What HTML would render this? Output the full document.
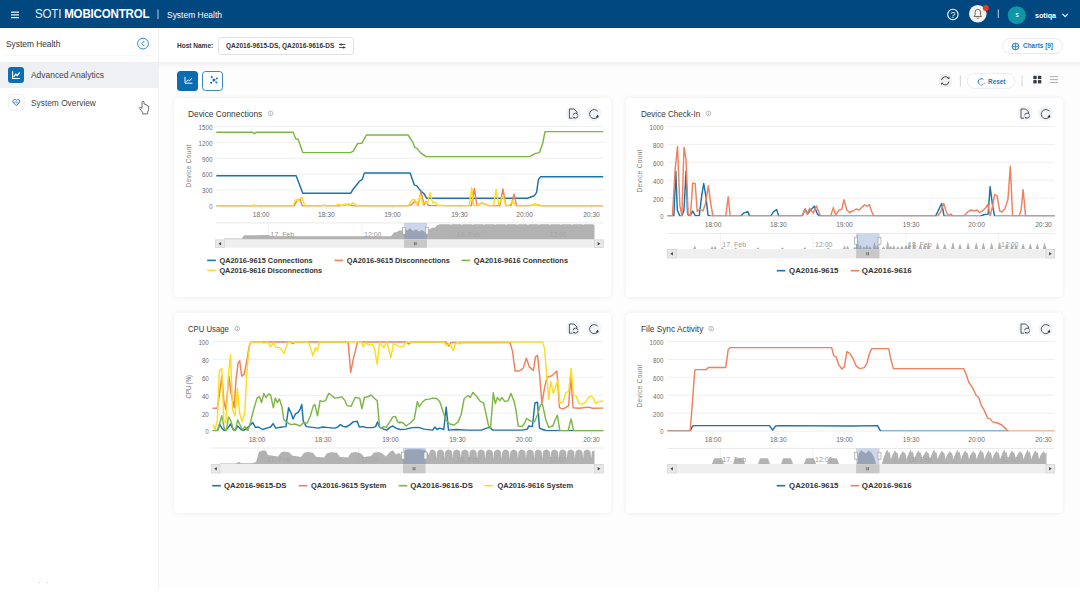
<!DOCTYPE html>
<html><head><meta charset="utf-8">
<style>
*{box-sizing:border-box;margin:0;padding:0}
html,body{width:1080px;height:607px;overflow:hidden;background:#fff;font-family:"Liberation Sans",sans-serif;}
.abs{position:absolute}
#hdr{position:absolute;left:0;top:0;width:1080px;height:28px;background:#00487f}
#side{position:absolute;left:0;top:28px;width:159px;height:560px;background:#fff;border-right:1px solid #f0f0f0}
#main{position:absolute;left:159px;top:28px;width:921px;height:560px;background:#fdfdfd}
#fbar{position:absolute;left:159px;top:28px;width:921px;height:34px;background:#fff}
#fsh{position:absolute;left:159px;top:62px;width:921px;height:8px;background:linear-gradient(to bottom,rgba(0,0,0,0.06),rgba(0,0,0,0.02) 50%,rgba(0,0,0,0))}
.card{position:absolute;background:#fff;border-radius:4px;box-shadow:0 0 5px rgba(0,0,0,0.075)}
.t{position:absolute;white-space:nowrap;line-height:1;transform-origin:0 50%}
svg text{font-family:"Liberation Sans",sans-serif}
.ax{font-size:6.6px;fill:#6c6c6c}
.nv{font-size:7px;fill:#9a9a9a}
.lg{font-size:7.6px;font-weight:bold;fill:#333}
.yt{font-size:6.4px;fill:#747474}
</style></head><body>
<div id="main"></div>
<div id="fbar"></div><div id="fsh"></div>
<div id="side"></div>
<div id="hdr"></div>

<!-- header -->
<svg class="abs" style="left:0;top:0" width="1080" height="28" viewBox="0 0 1080 28">
<g stroke="#fff" stroke-width="1.2"><line x1="11" x2="19" y1="12.2" y2="12.2"/><line x1="11" x2="19" y1="14.9" y2="14.9"/><line x1="11" x2="19" y1="17.6" y2="17.6"/></g>
<line x1="158" x2="158" y1="9.5" y2="19" stroke="#d6e0ea" stroke-width="0.9"/>
<circle cx="952.9" cy="14.5" r="5.2" fill="none" stroke="#fff" stroke-width="1.1"/>
<text x="952.9" y="17.6" text-anchor="middle" font-size="8.6" fill="#fff">?</text>
<circle cx="977.8" cy="13.7" r="8.8" fill="#f3f3f3"/>
<path d="M974.2 16.6 h6.6 l-0.9 -1.4 v-2.6 a2.4 2.4 0 0 0 -4.8 0 v2.6 z M976.6 17.6 a1 1 0 0 0 1.9 0" fill="none" stroke="#6f6250" stroke-width="0.85" stroke-linejoin="round" transform="translate(0.3 -0.4) translate(977.5 14) scale(1.12) translate(-977.5 -14)"/>
<circle cx="985.8" cy="8" r="3" fill="#e8391d"/>
<line x1="998.3" x2="998.3" y1="9.5" y2="18" stroke="#d6e0ea" stroke-width="0.9"/>
<circle cx="1016.8" cy="15.2" r="9" fill="#1097a7"/>
<text x="1017" y="17.2" text-anchor="middle" font-size="6.5" fill="#fff">s</text>
<path d="M1062.5 13.8 l2.7 2.8 l2.7 -2.8" fill="none" stroke="#fff" stroke-width="1.1"/>
</svg>
<div class="t" id="logo" style="left:35.0px;transform:scaleX(0.9620);top:8.3px;font-size:12px;color:#fff;letter-spacing:-0.2px"><span style="font-weight:normal;color:#e6eef6">SOTI</span> <b>MOBICONTROL</b></div>
<div class="t" id="hsys" style="left:167.0px;transform:scaleX(1.0098);top:10.5px;font-size:8.4px;color:#fff">System Health</div>
<div class="t" id="huser" style="left:1035.0px;transform:scaleX(0.9919);top:11.5px;font-size:7.2px;color:#fff;font-weight:bold">sotiqa</div>

<!-- sidebar -->
<div class="t" id="s1" style="left:6.2px;transform:scaleX(0.9715);top:39.6px;font-size:8.6px;color:#333">System Health</div>
<svg class="abs" style="left:0;top:28px" width="158" height="100" viewBox="0 28 158 100">
<circle cx="143" cy="43.6" r="5.4" fill="#fff" stroke="#1f7fc2" stroke-width="0.9"/>
<path d="M144.4 41 l-2.6 2.6 l2.6 2.6" fill="none" stroke="#1f7fc2" stroke-width="1"/>
<line x1="5" x2="152" y1="55.8" y2="55.8" stroke="#f5f5f5" stroke-width="1"/>
<rect x="0" y="62" width="158" height="26" fill="#eef0f3"/>
<rect x="8" y="67" width="16" height="16" rx="3" fill="#0f6db3"/>
<path d="M12.6 71.3 v7.2 h7.4 M13.8 76.8 l2 -2.6 l1.5 1.3 l2.3 -3.2" fill="none" stroke="#fff" stroke-width="1.2"/>
<rect x="8.5" y="94.5" width="15.5" height="15.5" rx="3" fill="#fff" stroke="#eceef1" stroke-width="0.8"/>
<path d="M16.3 105.6 l-3.2 -3.2 a1.8 1.8 0 0 1 3.2 -2 a1.8 1.8 0 0 1 3.2 2 z" fill="none" stroke="#2f80c2" stroke-width="1"/><path d="M13.2 102.6 h2 l0.8 -1.2 l0.9 2 l0.7 -0.8 h1.8" fill="none" stroke="#2f80c2" stroke-width="0.6"/>
<!-- hand cursor -->
<g transform="translate(139 101.3)"><path d="M3 1 v6 l-1.6 -1.2 l-1 1 l3.2 4.2 v1.6 h5 v-1.6 l1 -2.6 v-3.6 l-1.5 -0.4 v-0.6 l-1.5 -0.3 v-0.5 l-1.6 -0.3 v-1.7 a1 1 0 0 0 -2 0 z" fill="#fff" stroke="#333" stroke-width="0.7" stroke-linejoin="round"/></g>
</svg>
<div class="t" id="s2" style="left:30.7px;transform:scaleX(0.9581);top:71px;font-size:8.8px;color:#444">Advanced Analytics</div>
<div class="t" id="s3" style="left:30.7px;transform:scaleX(0.9483);top:98.5px;font-size:8.8px;color:#444">System Overview</div>
<div class="abs" style="left:38.5px;top:581.5px;width:1.5px;height:1.5px;background:#9fd8f0"></div>
<div class="abs" style="left:46.5px;top:581.5px;width:1.5px;height:1.5px;background:#9fd8f0"></div>

<!-- filter bar -->
<div class="t" id="hn" style="left:177.0px;transform:scaleX(0.9581);top:43.1px;font-size:6.8px;font-weight:bold;color:#333">Host Name:</div>
<div class="abs" style="left:218px;top:37px;width:136px;height:18px;border:1px solid #dfe1e5;border-radius:3px;background:#fff"></div>
<div class="t" id="hv" style="left:225.5px;transform:scaleX(0.9619);top:43.1px;font-size:6.8px;font-weight:bold;color:#333">QA2016-9615-DS, QA2016-9616-DS</div>
<svg class="abs" style="left:338px;top:42px" width="9" height="8" viewBox="0 0 9 8"><g stroke="#333" stroke-width="0.8"><line x1="1" x2="7.5" y1="2.5" y2="2.5"/><line x1="1" x2="7.5" y1="5.5" y2="5.5"/></g><circle cx="3.2" cy="2.5" r="1.1" fill="#333"/><circle cx="5.6" cy="5.5" r="1.1" fill="#333"/></svg>
<div class="abs" style="left:1002px;top:38px;width:60.5px;height:15.5px;border:1px solid #e8ebf0;border-radius:8px;background:#fff"></div>
<svg class="abs" style="left:1011px;top:41.5px" width="9" height="9" viewBox="0 0 9 9"><circle cx="4.5" cy="4.5" r="3.4" fill="#d8e8f5" stroke="#2378b9" stroke-width="0.9"/><path d="M4.5 1.2 v6.6 M1.2 4.5 h6.6" stroke="#2378b9" stroke-width="0.7"/></svg>
<div class="t" id="cb" style="left:1022.5px;transform:scaleX(0.9746);top:42.5px;font-size:6.6px;font-weight:bold;color:#2378b9">Charts [9]</div>

<!-- toolbar -->
<div class="abs" style="left:176.7px;top:71.3px;width:21px;height:19.5px;border-radius:3.5px;background:#0b6cb1"></div>
<svg class="abs" style="left:176.7px;top:71.3px" width="21" height="19.5" viewBox="0 0 21 19.5"><path d="M8 5.8 v6.4 h7.4 M9.2 10.4 l2.4 -1.3 l1 0.7 l1.8 -2.1" fill="none" stroke="#fff" stroke-width="1"/><circle cx="14.4" cy="7.6" r="0.7" fill="#fff"/></svg>
<div class="abs" style="left:202px;top:71.3px;width:21px;height:19.5px;border-radius:3.5px;background:#fff;border:1px solid #3c86bf"></div>
<svg class="abs" style="left:202px;top:71.3px" width="21" height="19.5" viewBox="0 0 21 19.5"><g fill="#1a6fb0"><circle cx="11.9" cy="9.1" r="1.45"/><circle cx="9.7" cy="6.1" r="1"/><circle cx="14.9" cy="7.4" r="0.95"/><circle cx="9.1" cy="11.8" r="1.05"/><circle cx="14.4" cy="11.5" r="1"/></g><path d="M9.7 6.1 L14.4 11.5 M14.9 7.4 L9.1 11.8" stroke="#1a6fb0" stroke-width="0.35"/></svg>
<svg class="abs" style="left:930px;top:70px" width="140" height="22" viewBox="930 70 140 22">
<circle cx="945.3" cy="80.8" r="6.8" fill="#eef0f2"/>
<path d="M941.6 80 a3.8 3.8 0 0 1 6.8 -1.8 M949 81.6 a3.8 3.8 0 0 1 -6.8 1.8" fill="none" stroke="#333" stroke-width="0.9"/>
<path d="M949.4 76.6 v2.2 h-2.2 z M941.2 85 v-2.2 h2.2 z" fill="#333"/>
<line x1="960.4" x2="960.4" y1="75.5" y2="86.5" stroke="#c9ccd1" stroke-width="0.8"/>
<rect x="967.3" y="73.4" width="47.6" height="15" rx="7.5" fill="#fff" stroke="#e8ebf0" stroke-width="0.9"/>
<path d="M983.4 79.4 a3.2 3.2 0 1 0 1 3.4" fill="none" stroke="#2378b9" stroke-width="1" stroke-dasharray="9 0.8 1.4 0.8 1.4 0.8"/>
<line x1="1022" x2="1022" y1="75.5" y2="86.5" stroke="#c9ccd1" stroke-width="0.8"/>
<g fill="#333a44"><rect x="1033.3" y="75.8" width="3.4" height="3.3"/><rect x="1037.9" y="75.8" width="3.4" height="3.3"/><rect x="1033.3" y="80.1" width="3.4" height="3.3"/><rect x="1037.9" y="80.1" width="3.4" height="3.3"/></g>
<g stroke="#999" stroke-width="0.8"><line x1="1050" x2="1058" y1="76.6" y2="76.6"/><line x1="1050" x2="1058" y1="79.6" y2="79.6"/><line x1="1050" x2="1058" y1="82.6" y2="82.6"/></g>
</svg>
<div class="t" id="rb" style="left:988.3px;transform:scaleX(0.9451);top:78.6px;font-size:6.8px;font-weight:bold;color:#2378b9">Reset</div>

<!-- cards -->
<div class="card" style="left:174px;top:98px;width:436.5px;height:199px"></div>
<div class="card" style="left:626px;top:98px;width:437px;height:199px"></div>
<div class="card" style="left:174px;top:312.5px;width:436.5px;height:200.5px"></div>
<div class="card" style="left:626px;top:312.5px;width:437px;height:200.5px"></div>
<div class="t ct" id="t1" style="left:188.4px;transform:scaleX(0.9270);top:109.8px;font-size:9px;color:#383838">Device Connections</div>
<div class="t ct" id="t2" style="left:640.5px;transform:scaleX(0.8981);top:109.8px;font-size:9px;color:#383838">Device Check-In</div>
<div class="t ct" id="t3" style="left:188.1px;transform:scaleX(0.8584);top:324.8px;font-size:9px;color:#383838">CPU Usage</div>
<div class="t ct" id="t4" style="left:640.5px;transform:scaleX(0.9225);top:324.8px;font-size:9px;color:#383838">File Sync Activity</div>

<svg class="abs" style="left:0;top:0" width="1080" height="607" viewBox="0 0 1080 607">
<line x1="216.3" x2="603.3" y1="126.5" y2="126.5" stroke="#e8e8e8" stroke-width="0.7"/>
<text x="212.5" y="129.8" text-anchor="end" class="ax" textLength="13.9" lengthAdjust="spacingAndGlyphs">1500</text>
<line x1="216.3" x2="603.3" y1="142.4" y2="142.4" stroke="#e8e8e8" stroke-width="0.7"/>
<text x="212.5" y="145.7" text-anchor="end" class="ax" textLength="13.9" lengthAdjust="spacingAndGlyphs">1200</text>
<line x1="216.3" x2="603.3" y1="158.3" y2="158.3" stroke="#e8e8e8" stroke-width="0.7"/>
<text x="212.5" y="161.6" text-anchor="end" class="ax" textLength="10.4" lengthAdjust="spacingAndGlyphs">900</text>
<line x1="216.3" x2="603.3" y1="174.1" y2="174.1" stroke="#e8e8e8" stroke-width="0.7"/>
<text x="212.5" y="177.4" text-anchor="end" class="ax" textLength="10.4" lengthAdjust="spacingAndGlyphs">600</text>
<line x1="216.3" x2="603.3" y1="190.0" y2="190.0" stroke="#e8e8e8" stroke-width="0.7"/>
<text x="212.5" y="193.3" text-anchor="end" class="ax" textLength="10.4" lengthAdjust="spacingAndGlyphs">300</text>
<line x1="216.3" x2="603.3" y1="205.9" y2="205.9" stroke="#e8e8e8" stroke-width="0.7"/>
<text x="212.5" y="209.2" text-anchor="end" class="ax" textLength="3.2" lengthAdjust="spacingAndGlyphs">0</text>
<line x1="261.1" x2="261.1" y1="206.0" y2="209.5" stroke="#dfe3ea" stroke-width="0.7"/>
<text x="261.1" y="217.0" text-anchor="middle" class="ax" textLength="16.7" lengthAdjust="spacingAndGlyphs">18:00</text>
<line x1="326.3" x2="326.3" y1="206.0" y2="209.5" stroke="#dfe3ea" stroke-width="0.7"/>
<text x="326.3" y="217.0" text-anchor="middle" class="ax" textLength="16.7" lengthAdjust="spacingAndGlyphs">18:30</text>
<line x1="392.5" x2="392.5" y1="206.0" y2="209.5" stroke="#dfe3ea" stroke-width="0.7"/>
<text x="392.5" y="217.0" text-anchor="middle" class="ax" textLength="16.7" lengthAdjust="spacingAndGlyphs">19:00</text>
<line x1="459.5" x2="459.5" y1="206.0" y2="209.5" stroke="#dfe3ea" stroke-width="0.7"/>
<text x="459.5" y="217.0" text-anchor="middle" class="ax" textLength="16.7" lengthAdjust="spacingAndGlyphs">19:30</text>
<line x1="524.7" x2="524.7" y1="206.0" y2="209.5" stroke="#dfe3ea" stroke-width="0.7"/>
<text x="524.7" y="217.0" text-anchor="middle" class="ax" textLength="16.7" lengthAdjust="spacingAndGlyphs">20:00</text>
<line x1="591.5" x2="591.5" y1="206.0" y2="209.5" stroke="#dfe3ea" stroke-width="0.7"/>
<text x="591.5" y="217.0" text-anchor="middle" class="ax" textLength="16.7" lengthAdjust="spacingAndGlyphs">20:30</text>
<clipPath id="cp1"><rect x="216.3" y="120.0" width="387.0" height="86.5"/></clipPath><g clip-path="url(#cp1)">
<path d="M216.3 132.2 L252.3 132.2 L254.4 133.6 L256.4 132.2 L293.1 132.2 L295.7 138.7 L298.1 139.3 L302.8 152.6 L350.1 152.6 L353.1 151.3 L357.6 143.6 L361.9 143.2 L366.4 135.0 L400.0 135.0 L408.1 135.0 L412.6 141.8 L414.7 147.3 L416.7 148.1 L420.4 152.6 L426.1 156.6 L529.4 156.6 L535.5 153.4 L539.5 152.6 L542.6 143.8 L545.0 131.6 L603.3 131.6" fill="none" stroke="#7db646" stroke-width="1.45" stroke-linejoin="round" stroke-linecap="round"/>
<path d="M216.3 175.8 L296.1 175.8 L302.8 193.3 L350.7 193.3 L353.1 189.2 L359.3 181.5 L362.3 179.4 L364.4 172.9 L400.0 172.9 L410.2 172.9 L414.3 185.1 L416.7 185.6 L420.4 190.6 L424.0 193.7 L426.5 198.2 L527.3 198.2 L534.4 195.7 L536.5 192.7 L538.5 179.4 L540.6 176.8 L603.3 176.8" fill="none" stroke="#1a73ab" stroke-width="1.45" stroke-linejoin="round" stroke-linecap="round"/>
<path d="M216.3 205.9 L294.1 205.9 L297.1 200.2 L300.2 199.4 L302.2 205.9 L322.6 205.9 L324.6 205.3 L326.7 205.9 L340.9 205.9 L345.0 204.9 L349.1 204.3 L352.1 205.9 L400.0 205.9 L408.1 205.9 L411.2 204.9 L415.3 200.8 L417.9 205.5 L421.0 191.7 L424.0 204.9 L426.1 201.4 L428.5 205.5 L471.3 205.9 L474.4 188.6 L477.0 205.9 L481.5 202.9 L489.6 205.9 L499.8 205.9 L502.9 189.0 L505.9 205.9 L511.0 205.5 L514.1 194.1 L516.5 205.9 L530.4 205.5 L535.5 204.3 L540.6 205.9 L603.3 205.9" fill="none" stroke="#f0805e" stroke-width="1.45" stroke-linejoin="round" stroke-linecap="round"/>
<path d="M216.3 205.9 L252.3 205.9 L253.7 204.7 L255.4 205.9 L293.1 205.9 L295.7 199.8 L297.7 200.8 L300.2 198.2 L302.2 197.8 L304.7 205.9 L320.6 205.9 L323.6 205.3 L326.7 205.9 L334.8 205.9 L337.9 204.3 L341.9 205.5 L346.0 203.9 L349.1 205.5 L353.1 202.9 L357.2 205.9 L400.0 205.9 L408.1 205.9 L412.2 199.8 L414.7 199.4 L417.3 204.9 L420.4 194.7 L422.8 203.9 L425.5 201.9 L427.5 202.9 L430.1 192.7 L432.6 202.9 L435.0 201.9 L437.7 205.5 L442.8 205.1 L444.8 205.9 L469.3 205.9 L471.7 187.6 L473.7 205.9 L476.4 205.5 L482.5 202.9 L489.6 205.9 L493.7 204.9 L496.1 189.6 L498.8 204.9 L500.8 199.8 L502.9 195.7 L505.9 205.5 L510.0 204.9 L512.4 200.8 L516.1 205.9 L530.4 205.9 L533.4 204.5 L539.5 204.9 L540.6 205.9 L603.3 205.9" fill="none" stroke="#fddc1e" stroke-width="1.45" stroke-linejoin="round" stroke-linecap="round"/>
</g>
<text transform="translate(190.5 166.0) rotate(-90)" text-anchor="middle" class="yt" textLength="43.0" lengthAdjust="spacing">Device Count</text>
<line x1="215.5" x2="603.3" y1="222.9" y2="222.9" stroke="#e0e0e0" stroke-width="0.7"/>
<line x1="268.4" x2="268.4" y1="222.9" y2="239.6" stroke="#e6e6e6" stroke-width="0.6"/>
<text x="270.5" y="237.4" class="nv">17. Feb</text>
<line x1="361.8" x2="361.8" y1="222.9" y2="239.6" stroke="#e6e6e6" stroke-width="0.6"/>
<text x="364.0" y="237.4" class="nv">12:00</text>
<line x1="453.5" x2="453.5" y1="222.9" y2="239.6" stroke="#e6e6e6" stroke-width="0.6"/>
<text x="456.5" y="237.4" class="nv">18. Feb</text>
<line x1="546.5" x2="546.5" y1="222.9" y2="239.6" stroke="#e6e6e6" stroke-width="0.6"/>
<text x="549.5" y="237.4" class="nv">12:00</text>
<path d="M224.0 239.6 L224.0 238.6 L241.8 238.6 L244.0 235.3 L268.0 235.1 L272.0 236.2 L391.0 236.2 L394.0 232.5 L397.0 232.0 L399.0 230.4 L402.0 230.4 L404.0 228.0 L407.0 230.5 L410.0 228.3 L413.0 231.0 L416.0 229.5 L419.0 231.5 L422.0 230.0 L425.0 232.0 L427.0 229.0 L430.0 229.2 L432.0 227.5 L435.0 227.8 L437.0 225.2 L440.0 224.2 L440.0 224.2 L450.0 224.2 L451.0 225.0 L452.0 224.2 L451.0 224.2 L461.0 224.2 L462.0 225.0 L463.0 224.2 L462.0 224.2 L472.0 224.2 L473.0 225.0 L474.0 224.2 L473.0 224.2 L483.0 224.2 L484.0 225.0 L485.0 224.2 L484.0 224.2 L494.0 224.2 L495.0 225.0 L496.0 224.2 L495.0 224.2 L505.0 224.2 L506.0 225.0 L507.0 224.2 L506.0 224.2 L516.0 224.2 L517.0 225.0 L518.0 224.2 L517.0 224.2 L527.0 224.2 L528.0 225.0 L529.0 224.2 L528.0 224.2 L538.0 224.2 L539.0 225.0 L540.0 224.2 L539.0 224.2 L549.0 224.2 L550.0 225.0 L551.0 224.2 L550.0 224.2 L560.0 224.2 L561.0 225.0 L562.0 224.2 L561.0 224.2 L571.0 224.2 L572.0 225.0 L573.0 224.2 L572.0 224.2 L582.0 224.2 L583.0 225.0 L584.0 224.2 L583.0 224.2 L593.0 224.2 L594.0 225.0 L595.0 224.2 L594.5 224.2 L594.5 239.6 Z" fill="#a4a4a4" fill-opacity="0.85"/>
<rect x="404.0" y="222.9" width="23.0" height="16.7" fill="#6685c2" fill-opacity="0.33"/>
<rect x="402.5" y="227.2" width="3" height="7" fill="#f4f4f4" stroke="#9a9a9a" stroke-width="0.6"/>
<rect x="425.5" y="227.2" width="3" height="7" fill="#f4f4f4" stroke="#9a9a9a" stroke-width="0.6"/>
<rect x="215.5" y="239.6" width="387.8" height="8.2" fill="#efefef"/>
<rect x="404.0" y="239.6" width="23.0" height="8.2" fill="#c8c8c8"/>
<line x1="414.5" x2="414.5" y1="242.1" y2="245.3" stroke="#444" stroke-width="0.7"/>
<line x1="416.1" x2="416.1" y1="242.1" y2="245.3" stroke="#444" stroke-width="0.7"/>
<rect x="215.5" y="239.9" width="8.8" height="7.6" fill="#e8e8e8" stroke="#cfcfcf" stroke-width="0.6"/>
<path d="M221.1 241.9 L221.1 245.5 L218.5 243.7 Z" fill="#444"/>
<rect x="594.5" y="239.9" width="8.8" height="7.6" fill="#e8e8e8" stroke="#cfcfcf" stroke-width="0.6"/>
<path d="M597.7 241.9 L597.7 245.5 L600.3 243.7 Z" fill="#444"/>
<line x1="207.2" x2="215.8" y1="260.4" y2="260.4" stroke="#1a73ab" stroke-width="1.6"/>
<text x="219.4" y="263.1" class="lg" textLength="93.2" lengthAdjust="spacingAndGlyphs">QA2016-9615 Connections</text>
<line x1="334.5" x2="343.1" y1="260.4" y2="260.4" stroke="#f0805e" stroke-width="1.6"/>
<text x="346.7" y="263.1" class="lg" textLength="103.2" lengthAdjust="spacingAndGlyphs">QA2016-9615 Disconnections</text>
<line x1="461.5" x2="470.1" y1="260.4" y2="260.4" stroke="#7db646" stroke-width="1.6"/>
<text x="473.7" y="263.1" class="lg" textLength="94.4" lengthAdjust="spacingAndGlyphs">QA2016-9616 Connections</text>
<line x1="207.2" x2="215.8" y1="270.4" y2="270.4" stroke="#fddc1e" stroke-width="1.6"/>
<text x="219.4" y="273.1" class="lg" textLength="102.8" lengthAdjust="spacingAndGlyphs">QA2016-9616 Disconnections</text>
<circle cx="573.6" cy="113.6" r="7.6" fill="#f3f4f6"/>
<circle cx="593.9" cy="113.6" r="7.6" fill="#f3f4f6"/>
<path d="M569.4 118.2 v-9.2 h4.6 l3 3 v1.6" fill="none" stroke="#3d4654" stroke-width="0.9" stroke-linejoin="round"/>
<path d="M569.4 118.2 h3" fill="none" stroke="#3d4654" stroke-width="0.9"/>
<circle cx="575.5" cy="115.6" r="2.5" fill="none" stroke="#3d4654" stroke-width="0.9" stroke-dasharray="6.5 1.5"/>
<circle cx="574.0" cy="117.8" r="0.8" fill="#3d4654"/>
<path d="M597.5 110.9 a4.6 4.6 0 1 0 0.6 5.6" fill="none" stroke="#3d4654" stroke-width="0.9" stroke-linecap="round"/>
<path d="M595.6 117.2 l2.9 0.3 l-0.5 -2.9 z" fill="#2a313c"/>
<circle cx="270.6" cy="113.4" r="2.3" fill="none" stroke="#8a8f98" stroke-width="0.6"/><path d="M270.6 113.2 v1.6" stroke="#8a8f98" stroke-width="0.7"/><circle cx="270.6" cy="112.3" r="0.4" fill="#8a8f98"/>
<line x1="667.3" x2="1054.7" y1="126.5" y2="126.5" stroke="#e8e8e8" stroke-width="0.7"/>
<text x="663.5" y="129.8" text-anchor="end" class="ax" textLength="13.9" lengthAdjust="spacingAndGlyphs">1000</text>
<line x1="667.3" x2="1054.7" y1="144.4" y2="144.4" stroke="#e8e8e8" stroke-width="0.7"/>
<text x="663.5" y="147.7" text-anchor="end" class="ax" textLength="10.4" lengthAdjust="spacingAndGlyphs">800</text>
<line x1="667.3" x2="1054.7" y1="162.3" y2="162.3" stroke="#e8e8e8" stroke-width="0.7"/>
<text x="663.5" y="165.6" text-anchor="end" class="ax" textLength="10.4" lengthAdjust="spacingAndGlyphs">600</text>
<line x1="667.3" x2="1054.7" y1="180.3" y2="180.3" stroke="#e8e8e8" stroke-width="0.7"/>
<text x="663.5" y="183.6" text-anchor="end" class="ax" textLength="10.4" lengthAdjust="spacingAndGlyphs">400</text>
<line x1="667.3" x2="1054.7" y1="198.2" y2="198.2" stroke="#e8e8e8" stroke-width="0.7"/>
<text x="663.5" y="201.5" text-anchor="end" class="ax" textLength="10.4" lengthAdjust="spacingAndGlyphs">200</text>
<line x1="667.3" x2="1054.7" y1="216.1" y2="216.1" stroke="#e8e8e8" stroke-width="0.7"/>
<text x="663.5" y="219.4" text-anchor="end" class="ax" textLength="3.2" lengthAdjust="spacingAndGlyphs">0</text>
<line x1="713.1" x2="713.1" y1="216.1" y2="219.6" stroke="#dfe3ea" stroke-width="0.7"/>
<text x="713.1" y="227.1" text-anchor="middle" class="ax" textLength="16.7" lengthAdjust="spacingAndGlyphs">18:00</text>
<line x1="778.3" x2="778.3" y1="216.1" y2="219.6" stroke="#dfe3ea" stroke-width="0.7"/>
<text x="778.3" y="227.1" text-anchor="middle" class="ax" textLength="16.7" lengthAdjust="spacingAndGlyphs">18:30</text>
<line x1="844.5" x2="844.5" y1="216.1" y2="219.6" stroke="#dfe3ea" stroke-width="0.7"/>
<text x="844.5" y="227.1" text-anchor="middle" class="ax" textLength="16.7" lengthAdjust="spacingAndGlyphs">19:00</text>
<line x1="911.2" x2="911.2" y1="216.1" y2="219.6" stroke="#dfe3ea" stroke-width="0.7"/>
<text x="911.2" y="227.1" text-anchor="middle" class="ax" textLength="16.7" lengthAdjust="spacingAndGlyphs">19:30</text>
<line x1="976.7" x2="976.7" y1="216.1" y2="219.6" stroke="#dfe3ea" stroke-width="0.7"/>
<text x="976.7" y="227.1" text-anchor="middle" class="ax" textLength="16.7" lengthAdjust="spacingAndGlyphs">20:00</text>
<line x1="1043.5" x2="1043.5" y1="216.1" y2="219.6" stroke="#dfe3ea" stroke-width="0.7"/>
<text x="1043.5" y="227.1" text-anchor="middle" class="ax" textLength="16.7" lengthAdjust="spacingAndGlyphs">20:30</text>
<clipPath id="cp2"><rect x="667.3" y="120.0" width="387.4" height="96.3"/></clipPath><g clip-path="url(#cp2)">
<path d="M667.3 216.1 L673.8 216.1 L675.8 171.3 L677.3 210.0 L679.9 216.1 L681.9 216.1 L684.0 210.0 L686.0 171.3 L687.6 214.1 L690.1 216.1 L692.7 211.0 L695.2 215.7 L699.3 215.7 L701.7 195.7 L703.7 183.5 L705.8 195.7 L708.0 215.1 L710.5 216.1 L741.0 216.1 L743.7 213.1 L747.7 211.6 L749.8 216.1 L770.6 216.1 L773.6 211.6 L776.7 209.6 L778.7 216.1 L802.1 216.1 L805.2 209.0 L807.6 214.1 L809.7 211.0 L814.4 206.3 L817.4 214.1 L819.4 216.1 L850.0 216.1 L850.0 216.1 L935.6 216.1 L941.7 203.5 L944.1 216.1 L980.4 216.1 L984.4 214.5 L988.1 214.1 L990.1 186.6 L992.6 205.9 L994.6 216.1 L1054.7 216.1" fill="none" stroke="#1a73ab" stroke-width="1.45" stroke-linejoin="round" stroke-linecap="round"/>
<path d="M667.3 216.1 L672.4 216.1 L675.2 169.3 L677.5 146.4 L679.9 205.9 L681.9 215.7 L684.0 147.3 L686.0 159.1 L688.1 214.1 L690.5 215.7 L692.7 183.1 L695.2 183.5 L697.2 211.6 L699.7 209.0 L702.9 211.0 L705.4 203.9 L708.4 185.6 L710.5 201.9 L712.9 216.1 L725.7 216.1 L728.2 196.8 L730.2 216.1 L800.1 216.1 L802.7 215.1 L804.8 209.4 L807.2 214.1 L809.7 208.4 L813.3 213.1 L816.4 205.9 L820.5 216.1 L830.6 216.1 L833.3 207.6 L835.7 215.1 L838.8 210.4 L841.9 209.0 L843.9 199.8 L846.9 210.0 L850.0 213.1 L850.0 212.0 L853.1 211.0 L856.1 209.0 L859.2 210.0 L862.2 206.9 L864.7 204.9 L867.3 206.3 L869.4 204.5 L871.4 211.0 L874.0 216.1 L937.6 216.1 L940.6 212.0 L943.7 203.5 L946.8 213.1 L948.8 215.7 L950.8 214.1 L952.9 216.1 L964.1 216.1 L968.1 211.6 L971.2 210.0 L974.3 211.0 L977.3 210.0 L979.4 212.6 L982.4 211.0 L985.5 208.0 L987.9 204.3 L990.1 216.1 L992.6 205.9 L994.6 194.7 L997.1 195.7 L999.7 211.0 L1001.8 212.0 L1004.8 209.0 L1007.9 199.8 L1010.3 166.2 L1012.6 216.1 L1019.1 216.1 L1021.1 210.0 L1023.1 189.6 L1025.6 216.1 L1054.7 216.1" fill="none" stroke="#f0805e" stroke-width="1.45" stroke-linejoin="round" stroke-linecap="round"/>
</g>
<text transform="translate(642.4 171.0) rotate(-90)" text-anchor="middle" class="yt" textLength="43.0" lengthAdjust="spacing">Device Count</text>
<line x1="667.3" x2="1054.7" y1="233.4" y2="233.4" stroke="#e0e0e0" stroke-width="0.7"/>
<line x1="720.3" x2="720.3" y1="233.4" y2="249.1" stroke="#e6e6e6" stroke-width="0.6"/>
<text x="722.3" y="246.9" class="nv">17. Feb</text>
<line x1="813.0" x2="813.0" y1="233.4" y2="249.1" stroke="#e6e6e6" stroke-width="0.6"/>
<text x="815.0" y="246.9" class="nv">12:00</text>
<line x1="906.0" x2="906.0" y1="233.4" y2="249.1" stroke="#e6e6e6" stroke-width="0.6"/>
<text x="908.0" y="246.9" class="nv">18. Feb</text>
<line x1="998.5" x2="998.5" y1="233.4" y2="249.1" stroke="#e6e6e6" stroke-width="0.6"/>
<text x="1001.0" y="246.9" class="nv">12:00</text>
<path d="M676.0 249.1 L693.3 249.1 L694.5 245.9 L695.1 245.9 L696.3 249.1 L710.6 249.1 L711.8 246.5 L712.4 246.5 L713.6 249.1 L713.7 249.1 L714.9 246.3 L715.5 246.3 L716.7 249.1 L720.8 249.1 L722.0 247.3 L722.6 247.3 L723.8 249.1 L734.1 249.1 L735.3 247.7 L735.9 247.7 L737.1 249.1 L756.5 249.1 L757.7 247.6 L758.3 247.6 L759.5 249.1 L780.9 249.1 L782.1 247.6 L782.7 247.6 L783.9 249.1 L803.3 249.1 L804.5 247.3 L805.1 247.3 L806.3 249.1 L826.7 249.1 L827.9 247.7 L828.5 247.7 L829.7 249.1 L843.0 249.1 L844.2 245.9 L844.8 245.9 L846.0 249.1 L846.1 249.1 L847.3 245.9 L847.9 245.9 L849.1 249.1 L853.2 249.1 L854.4 247.1 L855.0 247.1 L856.2 249.1 L855.7 249.1 L857.0 234.6 L857.6 234.6 L858.9 249.1 L858.9 249.1 L860.2 245.1 L860.8 245.1 L862.1 249.1 L862.4 249.1 L863.7 246.6 L864.3 246.6 L865.6 249.1 L865.4 249.1 L866.7 244.9 L867.3 244.9 L868.6 249.1 L868.4 249.1 L869.7 246.6 L870.3 246.6 L871.6 249.1 L872.9 249.1 L874.2 242.6 L874.8 242.6 L876.1 249.1 L875.9 249.1 L877.2 245.1 L877.8 245.1 L879.1 249.1 L881.8 249.1 L883.3 246.6 L883.9 246.6 L885.4 249.1 L885.9 249.1 L887.4 241.6 L888.0 241.6 L889.5 249.1 L888.9 249.1 L890.4 246.1 L891.0 246.1 L892.5 249.1 L892.0 249.1 L893.5 245.6 L894.1 245.6 L895.6 249.1 L896.1 249.1 L897.6 246.6 L898.2 246.6 L899.7 249.1 L900.1 249.1 L901.6 246.1 L902.2 246.1 L903.7 249.1 L904.2 249.1 L905.7 245.1 L906.3 245.1 L907.8 249.1 L907.3 249.1 L908.8 243.1 L909.4 243.1 L910.9 249.1 L912.4 249.1 L913.9 242.6 L914.5 242.6 L916.0 249.1 L918.5 249.1 L920.0 244.6 L920.6 244.6 L922.1 249.1 L922.6 249.1 L924.1 245.1 L924.7 245.1 L926.2 249.1 L926.6 249.1 L928.1 244.1 L928.7 244.1 L930.2 249.1 L935.8 249.1 L937.3 243.1 L937.9 243.1 L939.4 249.1 L942.9 249.1 L944.4 244.1 L945.0 244.1 L946.5 249.1 L951.1 249.1 L952.6 242.6 L953.2 242.6 L954.7 249.1 L958.2 249.1 L959.7 244.1 L960.3 244.1 L961.8 249.1 L966.3 249.1 L967.8 243.1 L968.4 243.1 L969.9 249.1 L974.5 249.1 L976.0 243.1 L976.6 243.1 L978.1 249.1 L981.6 249.1 L983.1 243.1 L983.7 243.1 L985.2 249.1 L989.8 249.1 L991.3 243.1 L991.9 243.1 L993.4 249.1 L997.9 249.1 L999.4 242.6 L1000.0 242.6 L1001.5 249.1 L1005.1 249.1 L1006.6 244.1 L1007.2 244.1 L1008.7 249.1 L1010.1 249.1 L1011.6 245.1 L1012.2 245.1 L1013.7 249.1 L1014.2 249.1 L1015.7 245.1 L1016.3 245.1 L1017.8 249.1 L1021.3 249.1 L1022.8 244.1 L1023.4 244.1 L1024.9 249.1 L1028.5 249.1 L1030.0 244.1 L1030.6 244.1 L1032.1 249.1 L1035.6 249.1 L1037.1 244.1 L1037.7 244.1 L1039.2 249.1 L1042.7 249.1 L1044.2 243.1 L1044.8 243.1 L1046.3 249.1 L1047.0 249.1 Z" fill="#a4a4a4" fill-opacity="0.85"/>
<rect x="856.1" y="233.4" width="23.4" height="15.7" fill="#6685c2" fill-opacity="0.33"/>
<rect x="854.6" y="237.2" width="3" height="7" fill="#f4f4f4" stroke="#9a9a9a" stroke-width="0.6"/>
<rect x="878.0" y="237.2" width="3" height="7" fill="#f4f4f4" stroke="#9a9a9a" stroke-width="0.6"/>
<rect x="667.3" y="249.1" width="387.4" height="9.2" fill="#efefef"/>
<rect x="856.1" y="249.1" width="23.4" height="9.2" fill="#c8c8c8"/>
<line x1="866.8" x2="866.8" y1="252.1" y2="255.3" stroke="#444" stroke-width="0.7"/>
<line x1="868.4" x2="868.4" y1="252.1" y2="255.3" stroke="#444" stroke-width="0.7"/>
<rect x="667.3" y="249.4" width="8.8" height="8.6" fill="#e8e8e8" stroke="#cfcfcf" stroke-width="0.6"/>
<path d="M672.9 251.9 L672.9 255.5 L670.3 253.7 Z" fill="#444"/>
<rect x="1045.9" y="249.4" width="8.8" height="8.6" fill="#e8e8e8" stroke="#cfcfcf" stroke-width="0.6"/>
<path d="M1049.1 251.9 L1049.1 255.5 L1051.7 253.7 Z" fill="#444"/>
<line x1="776.7" x2="785.3" y1="270.7" y2="270.7" stroke="#1a73ab" stroke-width="1.6"/>
<text x="789.1" y="273.4" class="lg" textLength="49.3" lengthAdjust="spacingAndGlyphs">QA2016-9615</text>
<line x1="850.6" x2="859.2" y1="270.7" y2="270.7" stroke="#f0805e" stroke-width="1.6"/>
<text x="861.8" y="273.4" class="lg" textLength="49.9" lengthAdjust="spacingAndGlyphs">QA2016-9616</text>
<circle cx="1025.2" cy="113.6" r="7.6" fill="#f3f4f6"/>
<circle cx="1045.6" cy="113.6" r="7.6" fill="#f3f4f6"/>
<path d="M1021.0 118.2 v-9.2 h4.6 l3 3 v1.6" fill="none" stroke="#3d4654" stroke-width="0.9" stroke-linejoin="round"/>
<path d="M1021.0 118.2 h3" fill="none" stroke="#3d4654" stroke-width="0.9"/>
<circle cx="1027.1" cy="115.6" r="2.5" fill="none" stroke="#3d4654" stroke-width="0.9" stroke-dasharray="6.5 1.5"/>
<circle cx="1025.6" cy="117.8" r="0.8" fill="#3d4654"/>
<path d="M1049.2 110.9 a4.6 4.6 0 1 0 0.6 5.6" fill="none" stroke="#3d4654" stroke-width="0.9" stroke-linecap="round"/>
<path d="M1047.3 117.2 l2.9 0.3 l-0.5 -2.9 z" fill="#2a313c"/>
<circle cx="708.4" cy="113.4" r="2.3" fill="none" stroke="#8a8f98" stroke-width="0.6"/><path d="M708.4 113.2 v1.6" stroke="#8a8f98" stroke-width="0.7"/><circle cx="708.4" cy="112.3" r="0.4" fill="#8a8f98"/>
<line x1="212.6" x2="603.3" y1="341.5" y2="341.5" stroke="#e8e8e8" stroke-width="0.7"/>
<text x="208.8" y="344.8" text-anchor="end" class="ax" textLength="10.4" lengthAdjust="spacingAndGlyphs">100</text>
<line x1="212.6" x2="603.3" y1="359.4" y2="359.4" stroke="#e8e8e8" stroke-width="0.7"/>
<text x="208.8" y="362.7" text-anchor="end" class="ax" textLength="6.9" lengthAdjust="spacingAndGlyphs">80</text>
<line x1="212.6" x2="603.3" y1="377.3" y2="377.3" stroke="#e8e8e8" stroke-width="0.7"/>
<text x="208.8" y="380.6" text-anchor="end" class="ax" textLength="6.9" lengthAdjust="spacingAndGlyphs">60</text>
<line x1="212.6" x2="603.3" y1="395.3" y2="395.3" stroke="#e8e8e8" stroke-width="0.7"/>
<text x="208.8" y="398.6" text-anchor="end" class="ax" textLength="6.9" lengthAdjust="spacingAndGlyphs">40</text>
<line x1="212.6" x2="603.3" y1="413.2" y2="413.2" stroke="#e8e8e8" stroke-width="0.7"/>
<text x="208.8" y="416.5" text-anchor="end" class="ax" textLength="6.9" lengthAdjust="spacingAndGlyphs">20</text>
<line x1="212.6" x2="603.3" y1="431.1" y2="431.1" stroke="#e8e8e8" stroke-width="0.7"/>
<text x="208.8" y="434.4" text-anchor="end" class="ax" textLength="3.2" lengthAdjust="spacingAndGlyphs">0</text>
<line x1="257.0" x2="257.0" y1="431.1" y2="434.6" stroke="#dfe3ea" stroke-width="0.7"/>
<text x="257.0" y="442.1" text-anchor="middle" class="ax" textLength="16.7" lengthAdjust="spacingAndGlyphs">18:00</text>
<line x1="323.2" x2="323.2" y1="431.1" y2="434.6" stroke="#dfe3ea" stroke-width="0.7"/>
<text x="323.2" y="442.1" text-anchor="middle" class="ax" textLength="16.7" lengthAdjust="spacingAndGlyphs">18:30</text>
<line x1="390.5" x2="390.5" y1="431.1" y2="434.6" stroke="#dfe3ea" stroke-width="0.7"/>
<text x="390.5" y="442.1" text-anchor="middle" class="ax" textLength="16.7" lengthAdjust="spacingAndGlyphs">19:00</text>
<line x1="457.5" x2="457.5" y1="431.1" y2="434.6" stroke="#dfe3ea" stroke-width="0.7"/>
<text x="457.5" y="442.1" text-anchor="middle" class="ax" textLength="16.7" lengthAdjust="spacingAndGlyphs">19:30</text>
<line x1="524.0" x2="524.0" y1="431.1" y2="434.6" stroke="#dfe3ea" stroke-width="0.7"/>
<text x="524.0" y="442.1" text-anchor="middle" class="ax" textLength="16.7" lengthAdjust="spacingAndGlyphs">20:00</text>
<line x1="591.5" x2="591.5" y1="431.1" y2="434.6" stroke="#dfe3ea" stroke-width="0.7"/>
<text x="591.5" y="442.1" text-anchor="middle" class="ax" textLength="16.7" lengthAdjust="spacingAndGlyphs">20:30</text>
<clipPath id="cp3"><rect x="212.6" y="335.0" width="390.7" height="96.3"/></clipPath><g clip-path="url(#cp3)">
<path d="M212.6 430.7 L217.7 430.1 L219.7 424.0 L221.8 428.1 L224.4 430.7 L227.9 428.1 L230.5 424.0 L233.0 429.1 L235.4 430.1 L237.6 426.0 L240.5 429.1 L243.1 430.7 L247.2 428.1 L250.3 425.0 L252.7 422.4 L255.4 427.4 L258.4 427.0 L262.5 429.5 L266.6 428.1 L270.6 427.0 L273.1 423.6 L275.7 428.1 L281.9 427.0 L285.9 426.6 L288.6 407.7 L291.0 412.8 L293.1 418.9 L295.5 413.8 L298.1 412.4 L300.2 409.1 L301.8 404.6 L303.2 420.9 L306.3 426.6 L312.4 427.4 L318.5 428.1 L322.6 427.0 L328.7 427.6 L334.8 428.1 L337.9 427.0 L340.3 424.6 L343.0 426.4 L346.0 427.0 L350.1 424.6 L353.1 421.9 L357.2 421.3 L359.3 427.0 L363.3 426.6 L366.4 427.6 L372.5 427.6 L375.6 426.6 L377.6 421.9 L379.6 427.4 L383.7 429.1 L386.8 430.1 L389.8 427.4 L392.9 426.0 L395.9 428.1 L400.0 429.5 L400.0 429.5 L406.1 429.1 L412.2 427.6 L418.3 427.4 L424.4 429.1 L432.6 430.1 L435.0 427.0 L437.1 429.5 L439.7 428.1 L443.8 429.5 L446.2 407.1 L448.5 430.1 L456.0 429.5 L467.2 430.1 L481.5 430.1 L486.6 428.1 L489.6 427.4 L492.7 430.1 L508.0 430.1 L522.2 430.1 L527.3 429.1 L528.7 426.0 L532.4 426.6 L534.9 403.0 L537.5 402.2 L539.5 428.1 L542.6 429.5 L546.7 430.7 L573.1 430.7 L603.3 430.7" fill="none" stroke="#1a73ab" stroke-width="1.45" stroke-linejoin="round" stroke-linecap="round"/>
<path d="M212.6 408.3 L217.3 408.3 L219.7 392.4 L221.8 376.1 L223.8 400.6 L225.8 409.7 L228.9 376.1 L230.9 392.4 L234.0 407.7 L236.0 380.2 L238.1 362.9 L239.7 360.8 L241.7 376.1 L244.2 374.1 L246.8 360.8 L249.3 345.6 L251.3 341.9 L290.0 341.9 L293.1 343.5 L295.1 341.9 L348.1 341.9 L350.7 372.4 L353.1 359.8 L357.6 341.9 L400.0 341.9 L400.0 341.9 L406.1 341.9 L408.6 343.9 L411.2 341.9 L445.8 341.9 L448.9 346.0 L450.9 342.5 L510.0 342.5 L512.4 350.6 L515.1 371.0 L519.2 371.0 L523.2 368.4 L526.3 358.2 L529.4 366.9 L533.4 370.4 L535.5 356.8 L537.5 355.3 L539.5 374.1 L542.0 403.6 L544.6 387.3 L547.1 377.1 L551.8 375.7 L556.9 371.0 L559.5 407.7 L563.0 409.1 L568.7 405.6 L570.7 376.1 L573.1 407.7 L579.3 408.3 L583.3 407.7 L588.4 407.1 L592.5 408.3 L603.3 408.1" fill="none" stroke="#f0805e" stroke-width="1.45" stroke-linejoin="round" stroke-linecap="round"/>
<path d="M212.6 430.7 L217.7 430.7 L219.7 423.0 L221.8 415.8 L224.4 429.1 L226.4 430.7 L228.5 416.9 L230.9 420.9 L233.4 430.1 L235.4 430.7 L237.6 419.9 L240.1 425.0 L242.7 430.1 L244.8 426.6 L247.8 430.7 L250.3 423.0 L253.3 410.7 L257.0 398.1 L259.4 396.5 L261.5 402.6 L263.9 393.4 L266.0 397.5 L268.6 394.0 L270.6 394.9 L273.3 407.7 L275.3 398.1 L277.4 402.6 L279.4 398.9 L281.9 406.7 L283.9 419.9 L288.0 423.0 L291.0 424.6 L295.1 424.0 L300.2 426.0 L303.2 423.0 L307.3 423.0 L310.4 415.8 L313.4 405.6 L314.9 404.6 L317.5 415.8 L320.1 400.6 L322.6 401.6 L325.6 400.6 L328.7 393.4 L331.8 395.5 L334.8 398.1 L338.9 397.5 L341.9 396.9 L345.0 400.6 L347.0 405.6 L351.1 406.3 L355.2 397.5 L359.7 398.1 L361.9 408.7 L364.4 397.5 L368.4 396.5 L371.1 395.1 L374.5 398.5 L377.2 400.6 L379.6 427.0 L381.7 428.1 L383.7 426.6 L386.1 427.4 L389.8 421.9 L392.9 416.9 L395.5 416.4 L397.6 421.9 L400.0 423.0 L400.0 421.9 L403.1 423.0 L406.1 426.0 L410.2 423.0 L414.3 418.9 L417.3 401.6 L419.4 406.7 L422.4 402.2 L425.5 399.5 L429.5 399.1 L432.6 398.1 L436.7 398.5 L439.7 401.6 L442.8 410.7 L445.8 419.9 L449.9 424.0 L454.0 425.0 L458.1 421.9 L461.1 414.8 L464.2 398.5 L468.2 395.5 L470.3 397.5 L472.9 392.4 L476.4 396.1 L480.5 401.6 L483.5 402.6 L485.6 411.8 L488.6 426.0 L490.6 428.1 L493.3 392.8 L495.3 403.6 L497.4 397.5 L499.8 400.6 L501.9 397.5 L504.9 401.6 L508.0 400.6 L511.0 393.4 L514.1 401.6 L516.1 410.7 L518.1 426.0 L522.2 426.6 L524.7 423.0 L526.7 418.5 L530.4 420.9 L534.4 421.9 L537.5 414.8 L540.6 404.6 L542.6 404.6 L545.6 418.9 L548.7 427.4 L552.8 426.0 L554.8 420.9 L557.3 415.2 L559.9 430.7 L568.1 430.7 L571.1 418.9 L573.6 430.7 L603.3 430.7" fill="none" stroke="#7db646" stroke-width="1.45" stroke-linejoin="round" stroke-linecap="round"/>
<path d="M212.6 424.0 L215.0 429.1 L217.3 420.9 L219.3 371.0 L221.8 368.4 L223.8 420.9 L225.8 423.0 L228.5 374.1 L230.5 354.7 L232.6 409.7 L235.0 415.8 L237.4 388.3 L239.5 412.8 L242.1 421.9 L244.8 412.8 L247.2 366.9 L249.7 343.5 L251.7 341.9 L261.5 341.9 L263.5 343.1 L267.6 341.9 L270.6 346.6 L273.7 342.5 L275.7 347.2 L279.8 347.6 L283.9 353.3 L288.0 342.5 L291.0 341.9 L308.3 341.9 L310.8 348.6 L312.8 355.7 L315.5 347.6 L317.5 350.6 L319.5 341.9 L361.3 341.9 L363.3 346.6 L366.4 342.5 L368.4 345.1 L372.5 344.5 L374.5 348.6 L377.2 364.3 L379.6 342.5 L383.7 347.6 L386.8 341.9 L390.8 357.8 L393.5 343.5 L396.9 345.6 L400.0 346.6 L400.0 346.6 L403.1 346.6 L405.7 342.5 L412.2 341.9 L443.8 341.9 L446.4 345.6 L448.9 343.5 L450.9 345.6 L453.4 350.6 L455.4 343.5 L458.1 341.9 L460.1 343.9 L462.1 341.9 L542.6 341.9 L544.6 348.6 L546.7 375.1 L548.7 399.5 L550.7 381.2 L553.2 393.4 L555.8 386.3 L557.9 380.2 L559.9 403.6 L563.0 401.6 L566.0 392.4 L568.7 391.4 L571.1 368.4 L573.6 395.5 L576.2 396.1 L579.3 403.6 L582.3 404.2 L585.4 402.6 L588.4 397.5 L591.5 396.1 L593.5 398.5 L595.6 403.6 L598.6 401.6 L603.3 401.0" fill="none" stroke="#fddc1e" stroke-width="1.45" stroke-linejoin="round" stroke-linecap="round"/>
</g>
<text transform="translate(190.5 386.8) rotate(-90)" text-anchor="middle" class="yt" textLength="23.5" lengthAdjust="spacing">CPU (%)</text>
<line x1="211.2" x2="603.3" y1="448.0" y2="448.0" stroke="#e0e0e0" stroke-width="0.7"/>
<line x1="265.0" x2="265.0" y1="448.0" y2="464.1" stroke="#e6e6e6" stroke-width="0.6"/>
<text x="267.0" y="461.9" class="nv">17. Feb</text>
<line x1="358.5" x2="358.5" y1="448.0" y2="464.1" stroke="#e6e6e6" stroke-width="0.6"/>
<text x="361.0" y="461.9" class="nv">12:00</text>
<line x1="453.0" x2="453.0" y1="448.0" y2="464.1" stroke="#e6e6e6" stroke-width="0.6"/>
<text x="456.0" y="461.9" class="nv">18. Feb</text>
<line x1="546.0" x2="546.0" y1="448.0" y2="464.1" stroke="#e6e6e6" stroke-width="0.6"/>
<text x="549.0" y="461.9" class="nv">12:00</text>
<path d="M220.0 464.1 L220.0 463.6 L236.0 463.4 L239.0 461.8 L241.0 463.2 L252.0 463.2 L256.0 462.0 L259.0 452.0 L262.0 450.5 L266.0 450.8 L268.0 455.0 L278.0 456.5 L281.0 452.5 L284.0 451.5 L289.0 452.3 L292.0 455.5 L301.0 457.0 L304.0 452.8 L308.0 452.0 L313.0 452.8 L316.0 456.8 L324.0 457.6 L327.0 453.2 L331.0 452.2 L337.0 452.8 L340.0 457.0 L348.0 457.4 L351.0 452.8 L356.0 452.0 L361.0 453.5 L364.0 457.0 L371.0 456.0 L374.0 452.5 L379.0 452.0 L383.0 454.0 L386.0 456.5 L390.0 451.8 L393.0 450.3 L396.0 454.5 L399.0 453.0 L402.0 456.0 L404.0 452.0 L405.0 450.0 L409.0 449.2 L420.0 449.2 L425.0 450.0 L427.0 452.0 L429.0 455.0 L430.0 451.0 L430.0 450.4 L432.0 449.6 L434.2 450.2 L435.7 451.5 L436.4 458.8 L437.1 451.5 L438.1 450.4 L440.1 449.6 L442.3 450.2 L443.8 451.5 L444.5 458.8 L445.2 451.5 L446.3 450.4 L448.3 449.6 L450.5 450.2 L452.0 451.5 L452.7 458.8 L453.4 451.5 L454.4 450.4 L456.4 449.6 L458.6 450.2 L460.1 451.5 L460.8 458.8 L461.5 451.5 L462.6 450.4 L464.6 449.6 L466.8 450.2 L468.3 451.5 L469.0 458.8 L469.7 451.5 L470.7 450.4 L472.7 449.6 L474.9 450.2 L476.4 451.5 L477.1 458.8 L477.8 451.5 L478.9 450.4 L480.9 449.6 L483.1 450.2 L484.6 451.5 L485.3 458.8 L486.0 451.5 L487.0 450.4 L489.0 449.6 L491.2 450.2 L492.7 451.5 L493.4 458.8 L494.1 451.5 L495.2 450.4 L497.2 449.6 L499.4 450.2 L500.9 451.5 L501.6 458.8 L502.3 451.5 L503.3 450.4 L505.3 449.6 L507.5 450.2 L509.0 451.5 L509.7 458.8 L510.4 451.5 L511.5 450.4 L513.5 449.6 L515.7 450.2 L517.2 451.5 L517.9 458.8 L518.6 451.5 L519.6 450.4 L521.6 449.6 L523.8 450.2 L525.3 451.5 L526.0 458.8 L526.7 451.5 L527.8 450.4 L529.8 449.6 L532.0 450.2 L533.5 451.5 L534.2 458.8 L534.9 451.5 L535.9 450.4 L537.9 449.6 L540.1 450.2 L541.6 451.5 L542.3 458.8 L543.0 451.5 L544.1 450.4 L546.1 449.6 L548.3 450.2 L549.8 451.5 L550.5 458.8 L551.2 451.5 L552.2 450.4 L554.2 449.6 L556.4 450.2 L557.9 451.5 L558.6 458.8 L559.3 451.5 L560.4 450.4 L562.4 449.6 L564.6 450.2 L566.1 451.5 L566.8 458.8 L567.5 451.5 L568.5 450.4 L570.5 449.6 L572.7 450.2 L574.2 451.5 L574.9 458.8 L575.6 451.5 L576.7 450.4 L578.7 449.6 L580.9 450.2 L582.4 451.5 L583.1 458.8 L583.8 451.5 L584.8 450.4 L586.8 449.6 L589.0 450.2 L590.5 451.5 L591.2 458.8 L591.9 451.5 L594.5 450.5 L594.5 464.1 Z" fill="#a4a4a4" fill-opacity="0.85"/>
<rect x="403.0" y="448.0" width="22.5" height="16.1" fill="#6685c2" fill-opacity="0.33"/>
<rect x="401.5" y="452.1" width="3" height="7" fill="#f4f4f4" stroke="#9a9a9a" stroke-width="0.6"/>
<rect x="424.0" y="452.1" width="3" height="7" fill="#f4f4f4" stroke="#9a9a9a" stroke-width="0.6"/>
<rect x="211.2" y="464.1" width="392.1" height="9.2" fill="#efefef"/>
<rect x="403.0" y="464.1" width="22.5" height="9.2" fill="#c8c8c8"/>
<line x1="413.2" x2="413.2" y1="467.1" y2="470.3" stroke="#444" stroke-width="0.7"/>
<line x1="414.9" x2="414.9" y1="467.1" y2="470.3" stroke="#444" stroke-width="0.7"/>
<rect x="211.2" y="464.4" width="8.8" height="8.6" fill="#e8e8e8" stroke="#cfcfcf" stroke-width="0.6"/>
<path d="M216.8 466.9 L216.8 470.5 L214.2 468.7 Z" fill="#444"/>
<rect x="594.5" y="464.4" width="8.8" height="8.6" fill="#e8e8e8" stroke="#cfcfcf" stroke-width="0.6"/>
<path d="M597.7 466.9 L597.7 470.5 L600.3 468.7 Z" fill="#444"/>
<line x1="212.2" x2="220.8" y1="485.7" y2="485.7" stroke="#1a73ab" stroke-width="1.6"/>
<text x="224.0" y="488.4" class="lg" textLength="62.6" lengthAdjust="spacingAndGlyphs">QA2016-9615-DS</text>
<line x1="298.8" x2="307.4" y1="485.7" y2="485.7" stroke="#f0805e" stroke-width="1.6"/>
<text x="311.0" y="488.4" class="lg" textLength="75.4" lengthAdjust="spacingAndGlyphs">QA2016-9615 System</text>
<line x1="398.6" x2="407.2" y1="485.7" y2="485.7" stroke="#7db646" stroke-width="1.6"/>
<text x="410.2" y="488.4" class="lg" textLength="62.7" lengthAdjust="spacingAndGlyphs">QA2016-9616-DS</text>
<line x1="484.5" x2="493.1" y1="485.7" y2="485.7" stroke="#fddc1e" stroke-width="1.6"/>
<text x="497.4" y="488.4" class="lg" textLength="75.8" lengthAdjust="spacingAndGlyphs">QA2016-9616 System</text>
<circle cx="573.6" cy="328.6" r="7.6" fill="#f3f4f6"/>
<circle cx="593.9" cy="328.6" r="7.6" fill="#f3f4f6"/>
<path d="M569.4 333.2 v-9.2 h4.6 l3 3 v1.6" fill="none" stroke="#3d4654" stroke-width="0.9" stroke-linejoin="round"/>
<path d="M569.4 333.2 h3" fill="none" stroke="#3d4654" stroke-width="0.9"/>
<circle cx="575.5" cy="330.6" r="2.5" fill="none" stroke="#3d4654" stroke-width="0.9" stroke-dasharray="6.5 1.5"/>
<circle cx="574.0" cy="332.8" r="0.8" fill="#3d4654"/>
<path d="M597.5 325.9 a4.6 4.6 0 1 0 0.6 5.6" fill="none" stroke="#3d4654" stroke-width="0.9" stroke-linecap="round"/>
<path d="M595.6 332.2 l2.9 0.3 l-0.5 -2.9 z" fill="#2a313c"/>
<circle cx="237.3" cy="328.6" r="2.3" fill="none" stroke="#8a8f98" stroke-width="0.6"/><path d="M237.3 328.4 v1.6" stroke="#8a8f98" stroke-width="0.7"/><circle cx="237.3" cy="327.5" r="0.4" fill="#8a8f98"/>
<line x1="667.3" x2="1054.7" y1="341.5" y2="341.5" stroke="#e8e8e8" stroke-width="0.7"/>
<text x="663.5" y="344.8" text-anchor="end" class="ax" textLength="13.9" lengthAdjust="spacingAndGlyphs">1000</text>
<line x1="667.3" x2="1054.7" y1="359.4" y2="359.4" stroke="#e8e8e8" stroke-width="0.7"/>
<text x="663.5" y="362.7" text-anchor="end" class="ax" textLength="10.4" lengthAdjust="spacingAndGlyphs">800</text>
<line x1="667.3" x2="1054.7" y1="377.3" y2="377.3" stroke="#e8e8e8" stroke-width="0.7"/>
<text x="663.5" y="380.6" text-anchor="end" class="ax" textLength="10.4" lengthAdjust="spacingAndGlyphs">600</text>
<line x1="667.3" x2="1054.7" y1="395.3" y2="395.3" stroke="#e8e8e8" stroke-width="0.7"/>
<text x="663.5" y="398.6" text-anchor="end" class="ax" textLength="10.4" lengthAdjust="spacingAndGlyphs">400</text>
<line x1="667.3" x2="1054.7" y1="413.2" y2="413.2" stroke="#e8e8e8" stroke-width="0.7"/>
<text x="663.5" y="416.5" text-anchor="end" class="ax" textLength="10.4" lengthAdjust="spacingAndGlyphs">200</text>
<line x1="667.3" x2="1054.7" y1="431.1" y2="431.1" stroke="#e8e8e8" stroke-width="0.7"/>
<text x="663.5" y="434.4" text-anchor="end" class="ax" textLength="3.2" lengthAdjust="spacingAndGlyphs">0</text>
<line x1="713.1" x2="713.1" y1="431.1" y2="434.6" stroke="#dfe3ea" stroke-width="0.7"/>
<text x="713.1" y="442.1" text-anchor="middle" class="ax" textLength="16.7" lengthAdjust="spacingAndGlyphs">18:00</text>
<line x1="778.3" x2="778.3" y1="431.1" y2="434.6" stroke="#dfe3ea" stroke-width="0.7"/>
<text x="778.3" y="442.1" text-anchor="middle" class="ax" textLength="16.7" lengthAdjust="spacingAndGlyphs">18:30</text>
<line x1="844.5" x2="844.5" y1="431.1" y2="434.6" stroke="#dfe3ea" stroke-width="0.7"/>
<text x="844.5" y="442.1" text-anchor="middle" class="ax" textLength="16.7" lengthAdjust="spacingAndGlyphs">19:00</text>
<line x1="911.2" x2="911.2" y1="431.1" y2="434.6" stroke="#dfe3ea" stroke-width="0.7"/>
<text x="911.2" y="442.1" text-anchor="middle" class="ax" textLength="16.7" lengthAdjust="spacingAndGlyphs">19:30</text>
<line x1="976.7" x2="976.7" y1="431.1" y2="434.6" stroke="#dfe3ea" stroke-width="0.7"/>
<text x="976.7" y="442.1" text-anchor="middle" class="ax" textLength="16.7" lengthAdjust="spacingAndGlyphs">20:00</text>
<line x1="1043.5" x2="1043.5" y1="431.1" y2="434.6" stroke="#dfe3ea" stroke-width="0.7"/>
<text x="1043.5" y="442.1" text-anchor="middle" class="ax" textLength="16.7" lengthAdjust="spacingAndGlyphs">20:30</text>
<clipPath id="cp4"><rect x="667.3" y="335.0" width="387.4" height="96.3"/></clipPath><g clip-path="url(#cp4)">
<path d="M667.3 431.1 L690.1 431.1 L692.7 426.0 L695.2 425.6 L769.5 425.6 L772.6 430.1 L775.6 426.0 L778.7 425.6 L850.0 426.0 L850.0 426.0 L877.5 425.6 L880.6 431.1 L1007.9 431.1" fill="none" stroke="#1a73ab" stroke-width="1.45" stroke-linejoin="round" stroke-linecap="round"/>
<path d="M667.3 431.1 L690.1 431.1 L692.1 406.7 L694.8 370.4 L696.2 369.6 L706.4 369.6 L708.4 367.4 L725.7 367.4 L728.2 349.6 L730.2 347.6 L831.7 347.6 L833.7 355.7 L836.1 356.8 L838.8 364.9 L841.9 369.0 L844.3 366.9 L846.9 351.7 L850.0 353.7 L850.0 353.7 L853.1 358.8 L856.1 365.9 L859.8 368.6 L864.3 367.6 L866.7 363.9 L869.4 353.7 L871.8 348.6 L888.7 348.6 L890.7 358.8 L893.4 368.6 L963.7 368.6 L966.1 374.1 L968.8 382.2 L972.2 387.3 L976.3 395.5 L978.7 397.5 L981.4 405.6 L984.4 410.7 L987.5 417.9 L990.1 418.9 L992.6 421.9 L997.7 423.0 L1001.8 425.0 L1005.2 428.1 L1007.9 431.1 L1054.7 431.1" fill="none" stroke="#f0805e" stroke-width="1.45" stroke-linejoin="round" stroke-linecap="round"/>
</g>
<text transform="translate(642.4 386.0) rotate(-90)" text-anchor="middle" class="yt" textLength="43.0" lengthAdjust="spacing">Device Count</text>
<line x1="667.3" x2="1054.7" y1="448.4" y2="448.4" stroke="#e0e0e0" stroke-width="0.7"/>
<line x1="720.3" x2="720.3" y1="448.4" y2="464.1" stroke="#e6e6e6" stroke-width="0.6"/>
<text x="722.3" y="461.9" class="nv">17. Feb</text>
<line x1="813.0" x2="813.0" y1="448.4" y2="464.1" stroke="#e6e6e6" stroke-width="0.6"/>
<text x="815.0" y="461.9" class="nv">12:00</text>
<line x1="906.0" x2="906.0" y1="448.4" y2="464.1" stroke="#e6e6e6" stroke-width="0.6"/>
<text x="908.0" y="461.9" class="nv">18. Feb</text>
<line x1="998.5" x2="998.5" y1="448.4" y2="464.1" stroke="#e6e6e6" stroke-width="0.6"/>
<text x="1001.0" y="461.9" class="nv">12:00</text>
<path d="M680.0 464.1 L712.0 464.1 L714.0 458.6 L715.0 458.2 L721.0 458.2 L722.0 458.6 L724.0 464.1 L733.0 464.1 L735.0 458.6 L736.0 458.2 L742.0 458.2 L743.0 458.6 L745.0 464.1 L758.0 464.1 L760.0 458.6 L761.0 458.2 L767.0 458.2 L768.0 458.6 L770.0 464.1 L781.0 464.1 L783.0 458.6 L784.0 458.2 L790.0 458.2 L791.0 458.6 L793.0 464.1 L804.0 464.1 L806.0 458.6 L807.0 458.2 L813.0 458.2 L814.0 458.6 L816.0 464.1 L827.0 464.1 L829.0 458.6 L830.0 458.2 L836.0 458.2 L837.0 458.6 L839.0 464.1 L857.0 464.1 L858.5 454.0 L861.0 450.2 L863.0 451.5 L866.0 453.5 L868.5 450.5 L871.0 452.0 L874.0 457.0 L876.0 464.1 L882.0 464.1 L883.0 459.5 L884.6 455.0 L886.2 451.5 L887.4 449.8 L888.4 452.8 L889.3 451.6 L890.2 455.0 L890.8 459.5 L892.4 455.0 L894.0 452.1 L895.2 450.4 L896.2 452.8 L897.1 452.2 L898.0 455.0 L898.6 459.5 L900.2 455.0 L901.8 452.7 L903.0 451.0 L904.0 452.8 L904.9 452.8 L905.8 455.0 L906.4 459.5 L908.0 455.0 L909.6 451.5 L910.8 449.8 L911.8 452.8 L912.7 451.6 L913.6 455.0 L914.2 459.5 L915.8 455.0 L917.4 452.1 L918.6 450.4 L919.6 452.8 L920.5 452.2 L921.4 455.0 L922.0 459.5 L923.6 455.0 L925.2 452.7 L926.4 451.0 L927.4 452.8 L928.3 452.8 L929.2 455.0 L929.8 459.5 L931.4 455.0 L933.0 451.5 L934.2 449.8 L935.2 452.8 L936.1 451.6 L937.0 455.0 L937.6 459.5 L939.2 455.0 L940.8 452.1 L942.0 450.4 L943.0 452.8 L943.9 452.2 L944.8 455.0 L945.4 459.5 L947.0 455.0 L948.6 452.7 L949.8 451.0 L950.8 452.8 L951.7 452.8 L952.6 455.0 L953.2 459.5 L954.8 455.0 L956.4 451.5 L957.6 449.8 L958.6 452.8 L959.5 451.6 L960.4 455.0 L961.0 459.5 L962.6 455.0 L964.2 452.1 L965.4 450.4 L966.4 452.8 L967.3 452.2 L968.2 455.0 L968.8 459.5 L970.4 455.0 L972.0 452.7 L973.2 451.0 L974.2 452.8 L975.1 452.8 L976.0 455.0 L976.6 459.5 L978.2 455.0 L979.8 451.5 L981.0 449.8 L982.0 452.8 L982.9 451.6 L983.8 455.0 L984.4 459.5 L986.0 455.0 L987.6 452.1 L988.8 450.4 L989.8 452.8 L990.7 452.2 L991.6 455.0 L992.2 459.5 L993.8 455.0 L995.4 452.7 L996.6 451.0 L997.6 452.8 L998.5 452.8 L999.4 455.0 L1000.0 459.5 L1001.6 455.0 L1003.2 451.5 L1004.4 449.8 L1005.4 452.8 L1006.3 451.6 L1007.2 455.0 L1007.8 459.5 L1009.4 455.0 L1011.0 452.1 L1012.2 450.4 L1013.2 452.8 L1014.1 452.2 L1015.0 455.0 L1015.6 459.5 L1017.2 455.0 L1018.8 452.7 L1020.0 451.0 L1021.0 452.8 L1021.9 452.8 L1022.8 455.0 L1023.4 459.5 L1025.0 455.0 L1026.6 451.5 L1027.8 449.8 L1028.8 452.8 L1029.7 451.6 L1030.6 455.0 L1031.2 459.5 L1032.8 455.0 L1034.4 452.1 L1035.6 450.4 L1036.6 452.8 L1037.5 452.2 L1038.4 455.0 L1039.0 459.5 L1040.6 455.0 L1042.2 452.7 L1043.4 451.0 L1044.4 452.8 L1045.3 452.8 L1046.2 455.0 L1045.0 458.0 L1046.5 450.5 L1046.5 464.1 Z" fill="#a4a4a4" fill-opacity="0.85"/>
<rect x="856.1" y="448.4" width="23.4" height="15.7" fill="#6685c2" fill-opacity="0.33"/>
<rect x="854.6" y="452.2" width="3" height="7" fill="#f4f4f4" stroke="#9a9a9a" stroke-width="0.6"/>
<rect x="878.0" y="452.2" width="3" height="7" fill="#f4f4f4" stroke="#9a9a9a" stroke-width="0.6"/>
<rect x="667.3" y="464.1" width="387.4" height="9.2" fill="#efefef"/>
<rect x="856.1" y="464.1" width="23.4" height="9.2" fill="#c8c8c8"/>
<line x1="866.8" x2="866.8" y1="467.1" y2="470.3" stroke="#444" stroke-width="0.7"/>
<line x1="868.4" x2="868.4" y1="467.1" y2="470.3" stroke="#444" stroke-width="0.7"/>
<rect x="667.3" y="464.4" width="8.8" height="8.6" fill="#e8e8e8" stroke="#cfcfcf" stroke-width="0.6"/>
<path d="M672.9 466.9 L672.9 470.5 L670.3 468.7 Z" fill="#444"/>
<rect x="1045.9" y="464.4" width="8.8" height="8.6" fill="#e8e8e8" stroke="#cfcfcf" stroke-width="0.6"/>
<path d="M1049.1 466.9 L1049.1 470.5 L1051.7 468.7 Z" fill="#444"/>
<line x1="776.7" x2="785.3" y1="485.7" y2="485.7" stroke="#1a73ab" stroke-width="1.6"/>
<text x="789.1" y="488.4" class="lg" textLength="49.3" lengthAdjust="spacingAndGlyphs">QA2016-9615</text>
<line x1="850.6" x2="859.2" y1="485.7" y2="485.7" stroke="#f0805e" stroke-width="1.6"/>
<text x="861.8" y="488.4" class="lg" textLength="49.9" lengthAdjust="spacingAndGlyphs">QA2016-9616</text>
<circle cx="1025.2" cy="328.6" r="7.6" fill="#f3f4f6"/>
<circle cx="1045.6" cy="328.6" r="7.6" fill="#f3f4f6"/>
<path d="M1021.0 333.2 v-9.2 h4.6 l3 3 v1.6" fill="none" stroke="#3d4654" stroke-width="0.9" stroke-linejoin="round"/>
<path d="M1021.0 333.2 h3" fill="none" stroke="#3d4654" stroke-width="0.9"/>
<circle cx="1027.1" cy="330.6" r="2.5" fill="none" stroke="#3d4654" stroke-width="0.9" stroke-dasharray="6.5 1.5"/>
<circle cx="1025.6" cy="332.8" r="0.8" fill="#3d4654"/>
<path d="M1049.2 325.9 a4.6 4.6 0 1 0 0.6 5.6" fill="none" stroke="#3d4654" stroke-width="0.9" stroke-linecap="round"/>
<path d="M1047.3 332.2 l2.9 0.3 l-0.5 -2.9 z" fill="#2a313c"/>
<circle cx="711.2" cy="328.6" r="2.3" fill="none" stroke="#8a8f98" stroke-width="0.6"/><path d="M711.2 328.4 v1.6" stroke="#8a8f98" stroke-width="0.7"/><circle cx="711.2" cy="327.5" r="0.4" fill="#8a8f98"/>
</svg>
</body></html>
